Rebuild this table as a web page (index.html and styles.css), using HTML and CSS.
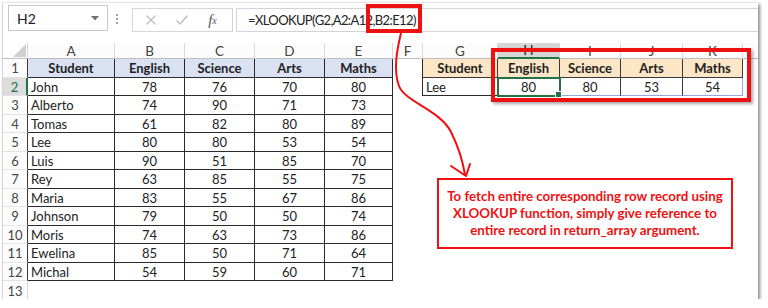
FILE: index.html
```html
<!DOCTYPE html>
<html>
<head>
<meta charset="utf-8">
<link rel="stylesheet" href="styles.css">
</head>
<body>
<div class="panel">
  <div class="fbar">
    <div class="namebox"><span>H2</span><svg class="dd" width="8" height="5" viewBox="0 0 8 5"><path d="M0 0H8L4 4.5Z" fill="#6f6f6f"/></svg></div>
    <div class="dots"><i></i><i></i><i></i></div>
    <div class="btns">
      <span class="slot"><svg width="12" height="12" viewBox="0 0 12 12"><path d="M1.5 1.5L10.5 10.5M10.5 1.5L1.5 10.5" stroke="#bcbcbc" stroke-width="1.3" fill="none"/></svg></span>
      <span class="slot"><svg width="14" height="12" viewBox="0 0 14 12"><path d="M1.5 6.5L5 10L12.5 1.5" stroke="#bcbcbc" stroke-width="1.4" fill="none"/></svg></span>
      <span class="slot fx"><i>f</i><sub>x</sub></span>
    </div>
    <div class="formula">=XLOOKUP(G2,A2:A12,B2:E12)</div>
  </div>

  <div class="sheet">
    <div class="corner"><svg width="13" height="13" viewBox="0 0 13 13"><path d="M13 0V13H0Z" fill="#d0d0d0"/></svg></div>
    <div class="ch">A</div><div class="ch">B</div><div class="ch">C</div><div class="ch">D</div><div class="ch">E</div><div class="ch">F</div><div class="ch">G</div><div class="ch sel">H</div><div class="ch">I</div><div class="ch">J</div><div class="ch">K</div><div class="ch last"></div>

    <div class="rh">1</div><div class="th">Student</div><div class="th">English</div><div class="th">Science</div><div class="th">Arts</div><div class="th">Maths</div><div class="c edge"></div><div class="gh">Student</div><div class="gh">English</div><div class="gh">Science</div><div class="gh">Arts</div><div class="gh">Maths</div><div class="c"></div>

    <div class="rh rsel">2</div><div class="t tl">John</div><div class="t">78</div><div class="t">76</div><div class="t">70</div><div class="t">80</div><div class="c edge"></div><div class="gd tl gname">Lee</div><div class="gd active">80</div><div class="gd">80</div><div class="gd">53</div><div class="gd gend">54</div><div class="c"></div>

    <div class="rh">3</div><div class="t tl">Alberto</div><div class="t">74</div><div class="t">90</div><div class="t">71</div><div class="t">73</div><div class="rest"></div>
    <div class="rh">4</div><div class="t tl">Tomas</div><div class="t">61</div><div class="t">82</div><div class="t">80</div><div class="t">89</div><div class="rest"></div>
    <div class="rh">5</div><div class="t tl">Lee</div><div class="t">80</div><div class="t">80</div><div class="t">53</div><div class="t">54</div><div class="rest"></div>
    <div class="rh">6</div><div class="t tl">Luis</div><div class="t">90</div><div class="t">51</div><div class="t">85</div><div class="t">70</div><div class="rest"></div>
    <div class="rh">7</div><div class="t tl">Rey</div><div class="t">63</div><div class="t">85</div><div class="t">55</div><div class="t">75</div><div class="rest"></div>
    <div class="rh">8</div><div class="t tl">Maria</div><div class="t">83</div><div class="t">55</div><div class="t">67</div><div class="t">86</div><div class="rest"></div>
    <div class="rh">9</div><div class="t tl">Johnson</div><div class="t">79</div><div class="t">50</div><div class="t">50</div><div class="t">74</div><div class="rest"></div>
    <div class="rh">10</div><div class="t tl">Moris</div><div class="t">74</div><div class="t">63</div><div class="t">73</div><div class="t">86</div><div class="rest"></div>
    <div class="rh">11</div><div class="t tl">Ewelina</div><div class="t">85</div><div class="t">50</div><div class="t">71</div><div class="t">64</div><div class="rest"></div>
    <div class="rh">12</div><div class="t tl">Michal</div><div class="t">54</div><div class="t">59</div><div class="t">60</div><div class="t">71</div><div class="rest"></div>
    <div class="rh plain">13</div><div class="rest wide"></div>
  </div>

  <div class="hl-formula"></div>
  <div class="hl-range"></div>
  <svg class="arrow" width="768" height="308" viewBox="0 0 768 308">
    <path d="M401 33C397 50 393 70 399 86C405 102 440 110 451 132C459 148 463 162 465 175" stroke="#ee1111" stroke-width="2" fill="none" stroke-linecap="round"/>
    <path d="M451 166L466 176L470 164" stroke="#ee1111" stroke-width="2" fill="none" stroke-linecap="round" stroke-linejoin="round"/>
  </svg>
  <div class="note">To fetch entire corresponding row record using<br>XLOOKUP function, simply give reference to<br>entire record in return_array argument.</div>
</div>
</body>
</html>
```

FILE: styles.css
```css
* { box-sizing: border-box; margin: 0; padding: 0; }
body { background: #fff; font-family: Lato, "Liberation Sans", sans-serif; color: #222; }

.panel {
  position: relative;
  margin: 2px 0 0 2px;
  width: 756px;
  height: 297px;
  border-left: 1px solid #d4d4d4;
  border-top: 1px solid #e6e6e6;
  box-shadow: 2px 2px 3px rgba(0, 0, 0, 0.45);
  overflow: hidden;
  background: #fff;
}

/* formula bar */
.fbar { display: flex; height: 29px; padding: 2px 0 0 5px; }
.namebox {
  width: 100px; height: 26px;
  border: 1px solid #c8c8c8;
  display: flex; align-items: center; justify-content: space-between;
  padding: 0 8px 0 8px;
  font-size: 14px; color: #222;
}
.dots { width: 3px; margin: 9px 0 0 8px; display: flex; flex-direction: column; gap: 2px; }
.dots i { display: block; width: 2px; height: 2px; background: #a0a0a0; }
.btns {
  margin: 3px 0 0 13px; width: 101px; height: 24px;
  border: 1px solid #d4d4d4;
  display: flex; align-items: center; padding-left: 2px;
}
.slot { width: 31px; display: flex; justify-content: center; align-items: center; }
.fx { font-family: "Liberation Serif", serif; color: #555; font-size: 15px; }
.fx sub { font-size: 10px; font-style: italic; vertical-align: -1px; }
.formula {
  margin: 3px 0 0 3px; flex: 1; height: 24px;
  border: 1px solid #d4d4d4; border-right: none;
  padding-left: 11px;
  display: flex; align-items: center;
  font-size: 13px; letter-spacing: -0.62px; color: #222;
}

/* sheet grid */
.sheet {
  margin-top: 11px;
  display: grid;
  grid-template-columns: 25px 87px 70px 70px 70px 68px 30px 75px 62px 61px 62px 60px 1fr;
  grid-template-rows: 16px 19px 18px 19px 18px 19px 18px 19px 18px 19px 18px 19px 18px 19px;
  font-size: 13px;
}
.sheet > div { display: flex; align-items: center; justify-content: center; white-space: nowrap; }

.corner { justify-content: flex-end !important; align-items: flex-end !important; padding: 0 1px 1px 0; border-right: 1px solid #d6d6d6; border-bottom: 1px solid #bdbdbd; }
.ch { background: #fcfcfc; color: #444; font-size: 13.5px; border-right: 1px solid #d9d9d9; border-bottom: 1px solid #bdbdbd; }
.ch.last { border-right: none; }
.ch.sel { background: #d6d6d6; color: #222; border-bottom: 2px solid #217346; }
.rh { background: #fcfcfc; color: #444; border-right: 1px solid #3a3a3a; border-bottom: 1px solid #e4e4e4; }
.rh.plain { border-right: 1px solid #d6d6d6; border-bottom: none; }
.rh.rsel { background: #dcdcdc; color: #217346; border-right: 2px solid #217346; }

.th { background: #d9e1f2; font-weight: 700; border-right: 1px solid #2a2a2a; border-bottom: 1px solid #2a2a2a; }
.t { border-right: 1px solid #2a2a2a; border-bottom: 1px solid #2a2a2a; }
.tl { justify-content: flex-start !important; padding-left: 3px; }
.c.edge { border-right: 1px solid #2a2a2a; }

.gh { background: #fce6c6; font-weight: 700; border-right: 1px solid #3a3a3a; border-bottom: 1px solid #3a3a3a; }
.gd { border-right: 1px solid #3a3a3a; border-bottom: 1px solid #8eaadb; }
.gd.gname { border-bottom: 1px solid #2a2a2a; }
.gd.gend { border-right: 1px solid #8eaadb; }
.gd.active { position: relative; outline: 2px solid #217346; outline-offset: -1px; }
.gd.active::after {
  content: ""; position: absolute; right: -3px; bottom: -3px;
  width: 5px; height: 5px; background: #217346; border: 1px solid #fff;
}
.rest { grid-column: 7 / -1; }
.rest.wide { grid-column: 2 / -1; }

/* annotations */
.hl-formula {
  position: absolute; left: 363px; top: 1px; width: 56px; height: 29px;
  border: 4px solid #ee1111;
}
.hl-range {
  position: absolute; left: 488px; top: 45px; width: 260px; height: 54px;
  border: 4px solid #ee1111;
  box-shadow: 2px 2px 3px rgba(0, 0, 0, 0.35);
}
.arrow { position: absolute; left: -3px; top: -3px; pointer-events: none; }
.note {
  position: absolute; left: 434px; top: 175px; width: 296px; height: 71px;
  border: 2px solid #ee1111;
  background: #fff;
  padding: 8px 4px;
  color: #ee1111; font-weight: 700; font-size: 13.3px; line-height: 17px;
  text-align: center; white-space: nowrap;
}
```
